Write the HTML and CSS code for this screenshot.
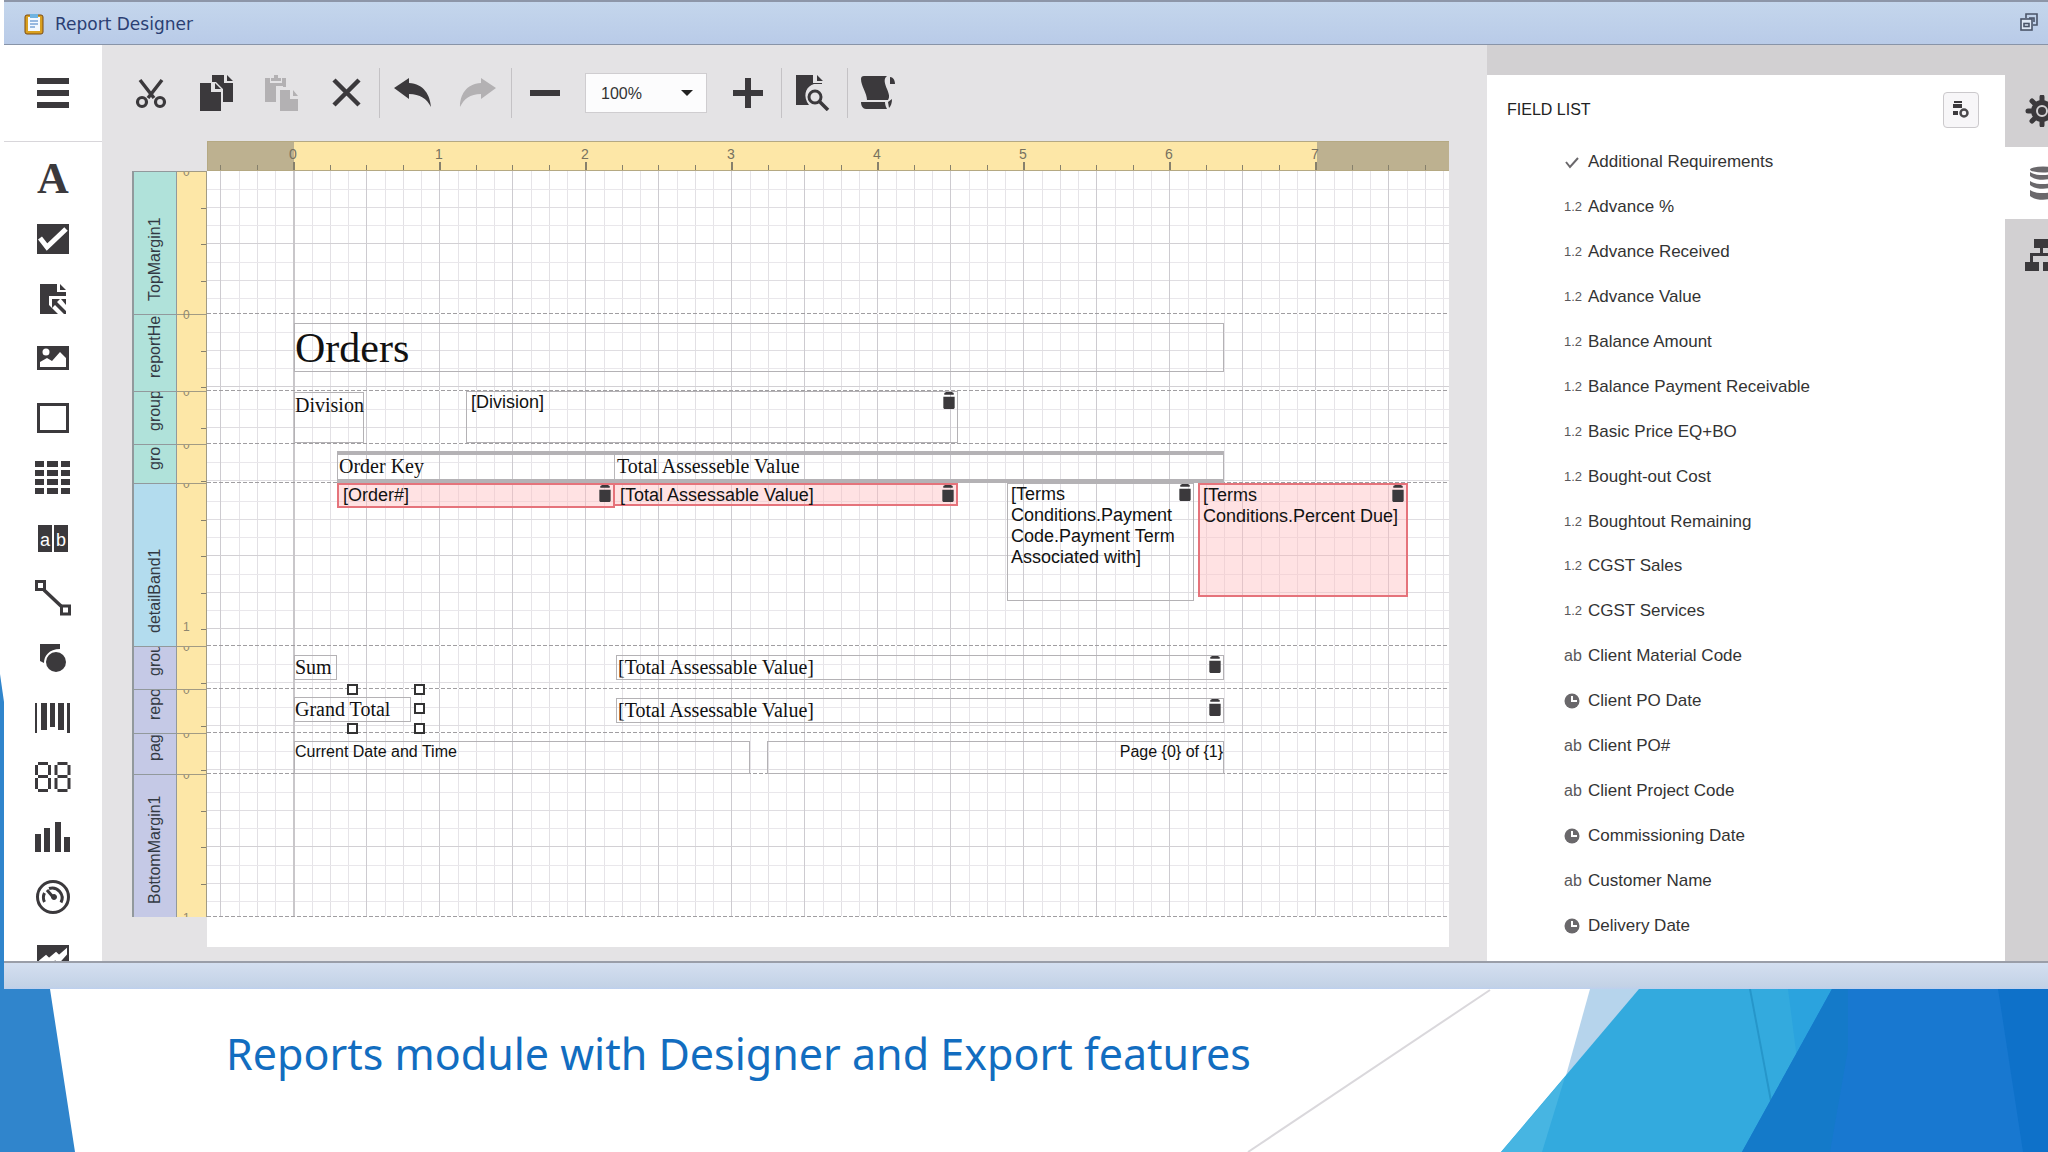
FILE: index.html
```html
<!DOCTYPE html>
<html lang="en">
<head>
<meta charset="utf-8">
<title>Report Designer</title>
<link rel="stylesheet" href="styles.css">
</head>
<body>
<div class="slide">
  <svg class="wedge" viewBox="0 0 76 478" aria-hidden="true"><path d="M0 0L4 28L50 315L75 478H0Z" fill="#3085cc"/></svg>

  <main class="window">
    <header class="titlebar">
      <svg class="titlebar-icon" viewBox="0 0 20 22" aria-hidden="true">
        <rect x="1" y="2" width="18" height="19" rx="2" fill="#d9a020" stroke="#7a4a12"/>
        <rect x="4" y="4" width="12" height="14" fill="#f4f9ff"/>
        <path d="M6 1h8v4H6z" fill="#6fb3e0"/>
        <path d="M6 8h8M6 11h8M6 14h5" stroke="#7aa4d6" stroke-width="1.4"/>
      </svg>
      <h1 class="titlebar-text">Report Designer</h1>
      <button class="restore" aria-label="Restore window">
        <svg viewBox="0 0 18 18" width="18" height="18" fill="none" stroke="#4a5468" stroke-width="1.6"><path d="M6 5V1h11v11h-4M9 5h5v4"/><rect x="1" y="6" width="11" height="11" fill="#dfe8f5"/><rect x="4" y="10.500" width="5" height="3"/></svg>
      </button>
    </header>

    <div class="body">
      <nav class="toolbox" aria-label="Report controls">
        <button class="menu" aria-label="Menu"><svg width="36" height="36" viewBox="0 0 36 36"><path d="M2 3h32v6H2zM2 15h32v6H2zM2 27h32v6H2z"/></svg></button>
        <div class="toolbox-list">
          <button aria-label="Label"><span class="letter">A</span></button>
          <button aria-label="Check box"><svg width="36" height="36" viewBox="0 0 36 36"><path d="M2 3h32v30H2z"/><path d="M5 17l7 9L31 8" fill="none" stroke="#fff" stroke-width="5"/></svg></button>
          <button aria-label="Rich text"><svg width="36" height="36" viewBox="0 0 36 36"><path d="M5 3h17v8h9v4H14v9l9 9H5zM25 3l6 6h-6z"/><path d="M17 18h8l-3 3 9 9v3h-2l-9-9-3 3z"/><path d="M26 18h5v6z"/></svg></button>
          <button aria-label="Picture"><svg width="36" height="36" viewBox="0 0 36 36"><path d="M2 6h32v24H2z"/><circle cx="11" cy="12" r="3.500" fill="#fff"/><path d="M5 27v-5l7-4 5 3 8-9 6 6v9z" fill="#fff"/></svg></button>
          <button aria-label="Panel"><svg width="36" height="36" viewBox="0 0 36 36"><path d="M3.500 4.500h29v27h-29z" fill="none" stroke="#3b393c" stroke-width="3"/></svg></button>
          <button aria-label="Table"><svg width="36" height="36" viewBox="0 0 36 36"><path d="M0 1h9v6H0zM12 1h11v6H12zM26 1h9v6h-9zM0 10h9v6H0zM12 10h11v6H12zM26 10h9v6h-9zM0 19h9v6H0zM12 19h11v6H12zM26 19h9v6h-9zM0 28h9v6H0zM12 28h11v6H12zM26 28h9v6h-9z"/></svg></button>
          <button aria-label="Character comb"><span class="comb"><i>a</i><i>b</i></span></button>
          <button aria-label="Line"><svg width="38" height="36" viewBox="0 0 38 36" fill="none" stroke="#3b393c"><path d="M10 10l18 17" stroke-width="3.500"/><path d="M2.500 1.500h8v8h-8zM27.500 26h8v8h-8z" stroke-width="3"/></svg></button>
          <button aria-label="Shape"><svg width="36" height="36" viewBox="0 0 36 36"><path d="M5 4h20v5C14 9 9 16 9 23l-4-2z"/><circle cx="21" cy="22" r="10"/></svg></button>
          <button aria-label="Barcode"><svg width="36" height="36" viewBox="0 0 36 36"><path d="M0 3h2v30H0zM6 3h6v27H6zM15 3h5v24h-5zM23 3h6v27h-6zM32 3h3v30h-3z"/></svg></button>
          <button aria-label="Zip code"><svg width="36" height="36" viewBox="0 0 36 36" fill="none" stroke="#3b393c" stroke-width="3"><path d="M3 4.500h10M3 17.500h10M3 31.500h10M1.500 6v10M1.500 19v11M14.500 6v10M14.500 19v11M22.500 4.500h10M22.500 17.500h10M22.500 31.500h10M21 6v10M21 19v11M34 6v10M34 19v11"/></svg></button>
          <button aria-label="Chart"><svg width="36" height="36" viewBox="0 0 36 36"><path d="M0 15h6v18H0zM9 9h6v24H9zM20 3h6v30h-6zM29 18h6v15h-6z"/></svg></button>
          <button aria-label="Gauge"><svg width="36" height="36" viewBox="0 0 36 36" fill="none" stroke="#3b393c"><circle cx="18" cy="18" r="15.500" stroke-width="3"/><path d="M9.500 23a10 10 0 0 1 0-9M14 9.500a10 10 0 0 1 12 14" stroke-width="3"/><path d="M12 11l6 7" stroke-width="3"/><circle cx="19" cy="18" r="2.500" fill="#3b393c"/></svg></button>
          <button aria-label="Sparkline"><svg width="36" height="36" viewBox="0 0 36 36"><path d="M2 6h32v30H2z"/><path d="M5 22l6-5 3 3 7-6 3 3 7-6v4l-7 8-4-3-6 6-3-2-6 6z" fill="#fff" stroke="#fff" stroke-width="2"/></svg></button>
        </div>
      </nav>

      <section class="workspace">
        <div class="toolbar" role="toolbar" aria-label="Edit">
          <div class="group">
            <button aria-label="Cut"><svg width="32" height="32" viewBox="0 0 32 32" fill="none" stroke="#3b393c"><path d="M5 3l14 18M27 3L13 21" stroke-width="3.500"/><circle cx="7" cy="25" r="4.500" stroke-width="3.200"/><circle cx="25" cy="25" r="4.500" stroke-width="3.200"/></svg></button>
            <button aria-label="Copy"><svg width="36" height="36" viewBox="0 0 36 36"><path d="M14 0h12v8h9v19H25V14l-7-7h-4zM29 0l6 6h-6zM2 8h11v9h10v19H2zM17 8l6 6h-6z"/></svg></button>
            <button aria-label="Paste" disabled><svg width="36" height="36" viewBox="0 0 36 36" fill="#b3b1b3"><path d="M2 3h5v5h12V3h4v9h-3v-1H13v16H2zM11 0h4v3h3v3H8V3h3zM17 15h10v9h8v12H17zM30 15l5 6h-5z"/></svg></button>
            <button aria-label="Delete"><svg width="32" height="32" viewBox="0 0 32 32" fill="none" stroke="#3b393c" stroke-width="4.500"><path d="M4 3l25 25M29 3L4 28"/></svg></button>
          </div>
          <div class="group">
            <button aria-label="Undo"><svg width="38" height="32" viewBox="0 0 38 32"><path d="M0 11L15 1v5c15 1 21 12 22 24-4-8-11-13-22-13v5z"/></svg></button>
            <button aria-label="Redo" disabled><svg width="38" height="32" viewBox="0 0 38 32" fill="#b3b1b3"><path d="M37 11L22 1v5C7 7 1 18 1 30c4-8 10-13 21-13v5z"/></svg></button>
          </div>
          <div class="group">
            <button aria-label="Zoom out"><svg width="32" height="32" viewBox="0 0 32 32"><path d="M1 13h30v6H1z"/></svg></button>
            <label class="zoom"><select aria-label="Zoom"><option>100%</option></select></label>
            <button aria-label="Zoom in"><svg width="32" height="32" viewBox="0 0 32 32"><path d="M1 13h12V1h6v12h12v6H19v12h-6V19H1z"/></svg></button>
          </div>
          <div class="group compact">
            <button aria-label="Preview"><svg width="36" height="36" viewBox="0 0 36 36"><path d="M2 0h17v8h9v1H20c-7 2-11 9-7 18l2 3H2zM23 0l6 6h-6z"/><circle cx="21" cy="22" r="6" fill="none" stroke="#3b393c" stroke-width="3"/><path d="M25 26l9 9" stroke="#3b393c" stroke-width="3.500"/></svg></button>
          </div>
          <div class="group compact">
            <button aria-label="Scripts"><svg width="36" height="36" viewBox="0 0 36 36"><path d="M4 1h23c-4 3-2 8 0 13s3 8 1 11H7c0-7-6-14-6-21 0-2 1-3 3-3zM30 2c3 0 5 3 5 7h-5zM1 27h24c0 3 1 5 2 7H6c-3 0-5-3-5-7zM28 27l4-3c0 4-1 7-3 9z"/></svg></button>
          </div>
        </div>

        <div class="design">
          <ol class="ruler"><li>0</li><li>1</li><li>2</li><li>3</li><li>4</li><li>5</li><li>6</li><li>7</li></ol>

          <section class="band teal h-top"><h2>TopMargin1</h2><div class="vruler"><span class="zero">0</span></div><div class="grid"></div></section>

          <section class="band teal h-report"><h2>reportHe</h2><div class="vruler open"><span class="zero">0</span></div>
            <div class="grid"><div class="ctl title-box">Orders</div></div></section>

          <section class="band teal h-group"><h2>group</h2><div class="vruler"><span class="zero">0</span></div>
            <div class="grid">
              <div class="ctl serif division">Division</div>
              <div class="ctl sans division-field">[Division]<svg class="db"><use href="#db"/></svg></div>
            </div></section>

          <section class="band teal h-head"><h2>gro</h2><div class="vruler"><span class="zero">0</span></div>
            <div class="grid"><div class="ctl serif head-row"><span>Order Key</span><span>Total Assesseble Value</span></div></div></section>

          <section class="band sky h-detail"><h2>detailBand1</h2><div class="vruler"><span class="zero">0</span><span class="one">1</span></div>
            <div class="grid">
              <div class="ctl sans bad order">[Order#]<svg class="db"><use href="#db"/></svg></div>
              <div class="ctl sans bad assess">[Total Assessable Value]<svg class="db"><use href="#db"/></svg></div>
              <div class="ctl sans terms">[Terms<br>Conditions.Payment<br>Code.Payment Term<br>Associated with]<svg class="db"><use href="#db"/></svg></div>
              <div class="ctl sans bad percent">[Terms<br>Conditions.Percent Due]<svg class="db"><use href="#db"/></svg></div>
            </div></section>

          <section class="band violet h-sum"><h2>grou</h2><div class="vruler"><span class="zero">0</span></div>
            <div class="grid">
              <div class="ctl serif sum">Sum</div>
              <div class="ctl serif total">[Total Assessable Value]<svg class="db"><use href="#db"/></svg></div>
            </div></section>

          <section class="band violet h-grand"><h2>repo</h2><div class="vruler"><span class="zero">0</span></div>
            <div class="grid">
              <div class="ctl serif grand">Grand Total</div>
              <i class="handle n"></i><i class="handle ne"></i><i class="handle e"></i><i class="handle s"></i><i class="handle se"></i>
              <div class="ctl serif total">[Total Assessable Value]<svg class="db"><use href="#db"/></svg></div>
            </div></section>

          <section class="band violet h-page"><h2>pag</h2><div class="vruler"><span class="zero">0</span></div>
            <div class="grid">
              <div class="ctl info date">Current Date and Time</div>
              <div class="ctl info pages">Page {0} of {1}</div>
            </div></section>

          <section class="band violet h-bottom"><h2>BottomMargin1</h2><div class="vruler"><span class="zero">0</span><span class="one">1</span></div><div class="grid"></div></section>
          <div class="tail"></div>
        </div>
      </section>

      <aside class="side">
        <section class="panel">
          <header class="panel-head">
            <h2>FIELD LIST</h2>
            <button aria-label="Add data source"><svg width="18" height="20" viewBox="0 0 18 20"><path d="M2 1h8v2H2zM1 4h9v4H1zM1 11h5v4H1z"/><circle cx="12" cy="13" r="3.500" fill="none" stroke="#4b494c" stroke-width="2.500"/></svg></button>
          </header>
          <ul class="fields">
            <li><svg class="kind" viewBox="0 0 16 16" fill="none" stroke="#6a686b" stroke-width="2"><path d="M2 8l4 5 8-9"/></svg>Additional Requirements</li>
            <li><span class="kind num">1.2</span>Advance %</li>
            <li><span class="kind num">1.2</span>Advance Received</li>
            <li><span class="kind num">1.2</span>Advance Value</li>
            <li><span class="kind num">1.2</span>Balance Amount</li>
            <li><span class="kind num">1.2</span>Balance Payment Receivable</li>
            <li><span class="kind num">1.2</span>Basic Price EQ+BO</li>
            <li><span class="kind num">1.2</span>Bought-out Cost</li>
            <li><span class="kind num">1.2</span>Boughtout Remaining</li>
            <li><span class="kind num">1.2</span>CGST Sales</li>
            <li><span class="kind num">1.2</span>CGST Services</li>
            <li><span class="kind str">ab</span>Client Material Code</li>
            <li><svg class="kind" viewBox="0 0 16 16"><use href="#clock"/></svg>Client PO Date</li>
            <li><span class="kind str">ab</span>Client PO#</li>
            <li><span class="kind str">ab</span>Client Project Code</li>
            <li><svg class="kind" viewBox="0 0 16 16"><use href="#clock"/></svg>Commissioning Date</li>
            <li><span class="kind str">ab</span>Customer Name</li>
            <li><svg class="kind" viewBox="0 0 16 16"><use href="#clock"/></svg>Delivery Date</li>
          </ul>
        </section>
        <nav class="tabs" aria-label="Panels">
          <button aria-label="Properties"><svg width="32" height="32" viewBox="0 0 32 32"><circle cx="17" cy="16" r="11"/><path d="M17 2v28M3 16h28M7 6l20 20M27 6L7 26" stroke="#3b393c" stroke-width="5" stroke-linecap="round"/><circle cx="17" cy="16" r="5" fill="none" stroke="#d2d0d2" stroke-width="2"/></svg></button>
          <button class="active" aria-label="Field list"><svg width="32" height="34" viewBox="0 0 32 34" fill="#6a686b"><ellipse cx="18" cy="3.500" rx="13" ry="3"/><path d="M5 6c5 4 21 4 26 0v4c-5 5-21 5-26 0zM5 15c5 4 21 4 26 0v4c-5 5-21 5-26 0zM5 24c5 4 21 4 26 0v6c-5 5-21 5-26 0z"/></svg></button>
          <button aria-label="Report explorer"><svg width="36" height="34" viewBox="0 0 36 34"><path d="M11 1h17v9h-8v5h10v9h4v9H20v-9h8v-6H10v6h6v9H2v-9h5v-9h10v-5h-6z"/></svg></button>
        </nav>
      </aside>
    </div>
    <div class="statusbar"></div>
  </main>

  <footer class="caption">
    <p>Reports module with Designer and Export features</p>
    <svg class="facets" viewBox="0 0 808 163" preserveAspectRatio="xMaxYMid slice" aria-hidden="true">
      <path d="M250 1L8 163" stroke="#dad8dc" stroke-width="2"/>
      <path d="M350 0h60L325 90z" fill="#b6d4ec"/>
      <path d="M399 0h195L504 163H261z" fill="#33aade"/>
      <path d="M325 88L302 163H261z" fill="#47b5e2"/>
      <path d="M548 0h46l-37 70z" fill="#2ba3de"/>
      <path d="M510 0l21 112" stroke="#2696ca" stroke-width="2"/>
      <path d="M592 0h216v163H502z" fill="#1878d0"/>
      <path d="M592 0h16v60L590 163H502z" fill="#147ac9"/>
      <path d="M758 0h50v163H783z" fill="#0e71c9"/>
    </svg>
  </footer>
</div>

<svg class="defs" width="0" height="0" aria-hidden="true">
  <symbol id="db" viewBox="0 0 12 18"><path d="M1 1l2-1h6l2 1v2H1zM0 5h12v12l-1 1H1l-1-1z"/></symbol>
  <symbol id="clock" viewBox="0 0 16 16"><circle cx="8" cy="8" r="7.500" fill="#6a686b"/><path d="M8 3v5h5" fill="none" stroke="#fff" stroke-width="2"/></symbol>
</svg>
</body>
</html>
```
FILE: styles.css
```css
* { box-sizing: border-box; }
body { margin: 0; background: #fff; font-family: "Liberation Sans", Arial, sans-serif; color: #333; }
button { border: 0; background: none; padding: 0; font: inherit; display: flex; align-items: center; justify-content: center; }
h1, h2, p, ul, ol { margin: 0; padding: 0; font-weight: normal; list-style: none; }
svg { fill: #3b393c; display: block; flex: none; }
svg[fill="none"] { fill: none; }
svg[fill="#b3b1b3"] { fill: #b3b1b3; }
svg[fill="#6a686b"] { fill: #6a686b; }
.defs { position: absolute; }

.slide { position: relative; min-height: 100vh; display: flex; flex-direction: column; overflow: hidden; }
.wedge { position: absolute; left: 0; bottom: 0; width: 76px; height: 478px; }
.window { position: relative; margin-left: 4px; background: #e4e3e5; }

.titlebar { display: flex; align-items: center; height: 45px; padding: 2px 10px 0 20px; border-top: 2px solid #8d96a8; border-bottom: 1px solid #8894a8; background: linear-gradient(#c4d6ec, #b9cbe8); }
.titlebar-icon { width: 20px; height: 22px; }
.titlebar-text { flex: 1; margin-left: 11px; font: 17px/24px "DejaVu Sans", Verdana, sans-serif; color: #2b3f73; }
.restore { margin-bottom: 4px; }

.body { display: flex; align-items: stretch; }
.toolbox { width: 98px; contain: size; overflow: hidden; background: #fff; }
.menu { width: 100%; height: 97px; border-bottom: 1px solid #d8d6da; }
.toolbox-list { display: grid; grid-auto-rows: 1fr; height: 838px; margin-top: 7px; }
.toolbox-list button { min-height: 0; }
.letter { font: bold 44px/44px "Liberation Serif", "Times New Roman", serif; color: #3b393c; }
.comb { display: flex; gap: 2px; }
.comb i { width: 14px; height: 27px; background: #3b393c; color: #fff; font: 18px/31px "Liberation Sans Narrow", "Liberation Sans", sans-serif; text-align: center; }

.workspace { flex: 1; min-width: 0; padding-bottom: 14px; }
.toolbar { display: flex; align-items: center; height: 96px; padding-left: 16px; }
.group { display: flex; align-items: center; height: 50px; padding-right: 1px; border-right: 1px solid #c4c2c5; }
.group:last-child { border-right: 0; }
.group button { width: 65px; height: 50px; }
.group.compact { padding-right: 5px; }
.group.compact button { width: 60px; }
.zoom { position: relative; width: 122px; margin: 0 8px; }
.zoom select { appearance: none; display: block; width: 100%; height: 40px; padding: 0 15px; border: 1px solid #cfcdd0; border-radius: 0; background: #fcfcfd; font: 16px "Liberation Sans", Arial, sans-serif; color: #333; }
.zoom::after { content: ""; position: absolute; right: 14px; top: 17px; border: 6px solid transparent; border-top-color: #222; border-bottom: 0; pointer-events: none; }

.design { margin: 0 38px 0 30px; }
.ruler { display: flex; height: 30px; margin-left: 75px; padding-left: 12px; overflow: hidden; border: 1px solid #b5a983; border-right: 0;
  background:
    repeating-linear-gradient(90deg, #86806c 0 2px, transparent 2px 146px) 85px 100% / 146px 8px repeat-x,
    linear-gradient(90deg, transparent 37px, #86806c 37px 38px, transparent 38px 73px, #86806c 73px 74px, transparent 74px 110px, #86806c 110px 111px, transparent 111px) 85px 100% / 146px 5px repeat-x,
    linear-gradient(90deg, #bdb190 86px, transparent 86px 1109px, #bdb190 1109px),
    #fde7a7; }
.ruler li { flex: none; width: 146px; text-align: center; font-size: 14px; line-height: 25px; color: #77725f; }

.band { display: grid; grid-template-columns: 45px 30px 1fr; }
.band h2 { display: flex; align-items: center; writing-mode: vertical-rl; transform: rotate(180deg); overflow: hidden; padding-top: 13px; border: solid #92999c; border-width: 0 2px 1px 1px; font-size: 16px; line-height: 40px; color: #333a44; white-space: nowrap; }
.teal h2 { background: #b0e2da; }
.sky h2 { background: #b3dcee; }
.violet h2 { background: #c5c9e6; }
.h-top { height: 143px; }
.h-report { height: 77px; }
.h-group { height: 53px; }
.h-head { height: 39px; }
.h-detail { height: 163px; }
.h-sum { height: 43px; }
.h-grand { height: 44px; }
.h-page { height: 41px; }
.h-bottom { height: 143px; }
.tail { height: 30px; margin-left: 75px; background: #fff; }

.vruler { position: relative; overflow: hidden; border-top: 1px solid #a29b84; border-right: 1px solid #a29b84;
  background: linear-gradient(transparent 36px, #86806c 36px 37px, transparent 37px 72px, #86806c 72px 73px, transparent 73px 109px, #86806c 109px 110px, transparent 110px 145px, #86806c 145px) 100% 0 / 5px 146px repeat-y, #fde7a7; }
.vruler.open { overflow: visible; }
.vruler span { position: absolute; left: 6px; font-size: 12px; line-height: 14px; color: #8d866e; }
.vruler .zero { top: -7px; }
.vruler .one { top: 136px; }

.grid { position: relative; background:
    linear-gradient(90deg, #a09ea1 4px, #fff 4px) 0 100% / 6px 1px repeat-x,
    linear-gradient(90deg, transparent 86px, #c9c7ca 86px 88px, transparent 88px) no-repeat,
    linear-gradient(transparent 72px, #d2d0d4 72px) 0 0 / 73px 73px,
    linear-gradient(90deg, transparent 72px, #cdcbd0 72px) 14px 0 / 73px 73px,
    linear-gradient(transparent 18px, #e9e7eb 18px 19px, transparent 19px 36px, #dfdde1 36px 37px, transparent 37px 54px, #e9e7eb 54px 55px, transparent 55px) 0 0 / 73px 73px,
    linear-gradient(90deg, transparent 18px, #e6e4e8 18px 19px, transparent 19px 36px, #e2e0e4 36px 37px, transparent 37px 54px, #e6e4e8 54px 55px, transparent 55px) 14px 0 / 73px 73px,
    #fff; }

.ctl { position: absolute; border: 1px solid #b4b2b5; color: #111; white-space: nowrap; }
.serif { font: 20px/22px "Liberation Serif", "Times New Roman", serif; }
.sans { font-size: 18px; line-height: 21px; padding-left: 3px; }
.info { font-size: 16px; line-height: 20px; }
.bad { border: 2px solid #e5737b; background: rgba(255, 190, 193, .45); }
.db { position: absolute; right: 2px; top: 0; width: 12px; height: 17px; }

.title-box { left: 87px; top: 9px; width: 930px; height: 49px; font: 42px/48px "Liberation Serif", "Times New Roman", serif; }
.division { left: 87px; top: 1px; width: 70px; height: 51px; line-height: 25px; }
.division-field { left: 259px; top: 0; width: 492px; height: 52px; padding-left: 4px; }
.head-row { left: 130px; top: 7px; width: 887px; height: 32px; display: flex; border-width: 4px 1px; }
.head-row span { padding-left: 2px; line-height: 23px; }
.head-row span:first-child { width: 277px; padding-left: 1px; border-right: 1px solid #b9b7ba; }
.order { left: 130px; top: 0; width: 278px; height: 25px; padding-left: 4px; }
.assess { left: 406px; top: 0; width: 345px; height: 23px; padding-left: 5px; }
.terms { left: 800px; top: 0; width: 187px; height: 118px; }
.percent { left: 991px; top: 0; width: 210px; height: 114px; }
.sum { left: 87px; top: 9px; width: 43px; height: 25px; }
.total { left: 409px; top: 9px; width: 608px; height: 25px; padding-left: 1px; }
.grand { left: 87px; top: 8px; width: 117px; height: 25px; }
.date { left: 87px; top: 8px; width: 456px; height: 33px; }
.pages { left: 560px; top: 8px; width: 457px; height: 33px; text-align: right; }
.handle { position: absolute; z-index: 1; width: 11px; height: 11px; border: 2px solid #333; background: #fff; }
.n, .s { left: 140px; }
.ne, .e, .se { left: 207px; }
.n, .ne { top: -5px; }
.e { top: 14px; }
.s, .se { top: 34px; }

.side { display: flex; width: 561px; padding-top: 30px; background: #d2d0d2; }
.panel { flex: 1; background: #fff; }
.panel-head { display: flex; align-items: center; justify-content: space-between; height: 65px; padding: 4px 26px 0 20px; }
.panel-head h2 { font-size: 16px; line-height: 20px; color: #222; }
.panel-head button { width: 36px; height: 36px; border: 1px solid #cbc9cc; border-radius: 4px; background: #f7f6f8; }
.fields { display: grid; grid-auto-rows: 1fr; height: 808px; }
.fields li { display: flex; align-items: center; gap: 8px; padding-left: 77px; font-size: 17px; line-height: 20px; }
.kind { width: 16px; height: 16px; color: #5a585b; text-align: center; line-height: 16px; font-family: "Liberation Sans Narrow", "Liberation Sans", sans-serif; }
.num { font-size: 13px; }
.str { font-size: 16px; }
.tabs { width: 43px; overflow: hidden; }
.tabs button { width: 72px; height: 72px; }
.tabs .active { background: #fff; }

.statusbar { height: 28px; border-top: 2px solid #9a9ea8; background: linear-gradient(#d4dff0, #c3d2e6 90%, #bccfee); }

.caption { position: relative; flex: 1; min-height: 163px; padding: 39px 0 0 226px; }
.caption p { font: 43px/52px "Noto Sans", "Open Sans", sans-serif; color: #126dc0; }
.facets { position: absolute; right: 0; bottom: 0; width: 808px; height: 100%; }
```
